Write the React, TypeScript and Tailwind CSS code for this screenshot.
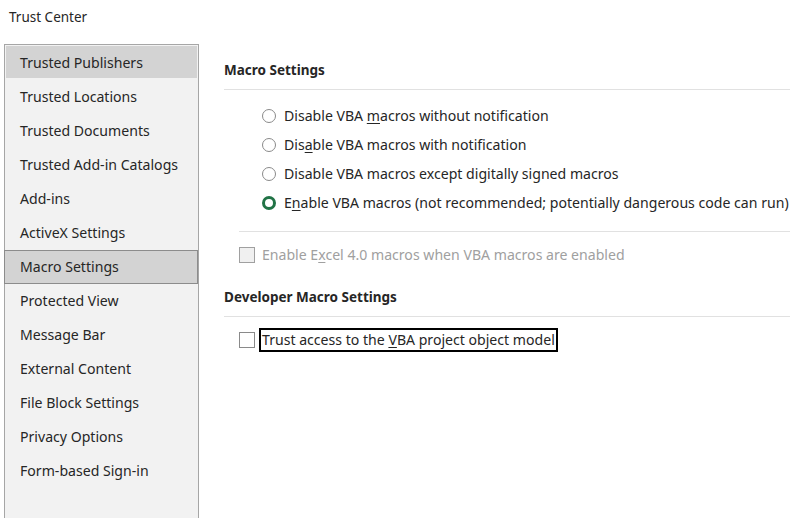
import React from 'react';

const navItems = [
  'Trusted Publishers',
  'Trusted Locations',
  'Trusted Documents',
  'Trusted Add-in Catalogs',
  'Add-ins',
  'ActiveX Settings',
  'Macro Settings',
  'Protected View',
  'Message Bar',
  'External Content',
  'File Block Settings',
  'Privacy Options',
  'Form-based Sign-in',
];

function Radio({ checked }: { checked?: boolean }) {
  return checked ? (
    <span className="w-[14px] h-[14px] rounded-full border-[3px] border-[#217346] bg-white shrink-0" />
  ) : (
    <span className="w-[14px] h-[14px] rounded-full border border-[#8a8a8a] bg-white shrink-0" />
  );
}

export default function App() {
  return (
    <div
      className="w-[790px] h-[518px] bg-white overflow-hidden text-[14.1px] text-[#262626] whitespace-nowrap"
      style={{ fontFamily: '"Noto Sans", "Open Sans", sans-serif' }}
    >
      {/* Title */}
      <div className="h-[44px] pl-[9px] pt-[6px] text-[13.5px] leading-[22px] text-[#262626]">Trust Center</div>

      <div className="flex">
        {/* Left nav */}
        <div className="ml-[4px] w-[195px] shrink-0 h-[520px] border border-[#a6a6a6] bg-[#f2f2f2] pt-[1px]">
          {navItems.map((item, i) => {
            if (i === 0) {
              return (
                <div key={item} className="mx-[1px] h-[32px] mb-[2px] bg-[#d3d3d3] pl-[14px] pt-[1px] flex items-center">
                  {item}
                </div>
              );
            }
            if (item === 'Macro Settings') {
              return (
                <div key={item} className="-ml-[1px] h-[34px] bg-[#d3d3d3] border border-[#8c8c8c] pl-[15px] flex items-center">
                  {item}
                </div>
              );
            }
            return (
              <div key={item} className="h-[34px] pl-[15px] pb-[1px] flex items-center">
                {item}
              </div>
            );
          })}
        </div>

        {/* Right content */}
        <div className="flex-1 ml-[25px]">
          <div className="h-[45px] pt-[8px] flex items-center font-bold text-[13.5px] text-[#262626]">Macro Settings</div>
          <div className="h-px bg-[#e1e1e1]" />

          <div className="pt-[11px] pl-[38px] flex flex-col">
            <label className="h-[29px] flex items-center gap-[8px]">
              <Radio />
              <span>Disable VBA <u className="underline-offset-2">m</u>acros without notification</span>
            </label>
            <label className="h-[29px] flex items-center gap-[8px]">
              <Radio />
              <span>Dis<u className="underline-offset-2">a</u>ble VBA macros with notification</span>
            </label>
            <label className="h-[29px] flex items-center gap-[8px]">
              <Radio />
              <span>Disable VBA macros except di<u className="underline-offset-2">g</u>itally signed macros</span>
            </label>
            <label className="h-[29px] flex items-center gap-[8px]">
              <Radio checked />
              <span>E<u className="underline-offset-2">n</u>able VBA macros (not recommended; potentially dangerous code can run)</span>
            </label>
          </div>

          <div className="ml-[15px] mt-[14px] h-px bg-[#e1e1e1]" />

          <div className="ml-[15px] mt-[14px] h-[18px] flex items-center gap-[7px] text-[#a0a0a0]">
            <span className="w-[16px] h-[16px] border border-[#a0a0a0] bg-[#f0f0f0] shrink-0" />
            <span>Enable E<u className="underline-offset-2">x</u>cel 4.0 macros when VBA macros are enabled</span>
          </div>

          <div className="h-[52px] pt-[14px] flex items-center font-bold text-[13.5px]">Developer Macro Settings</div>
          <div className="h-px bg-[#e1e1e1]" />

          <div className="ml-[15px] mt-[11px] flex items-center gap-[4px]">
            <span className="w-[16px] h-[16px] border border-[#8a8a8a] bg-white shrink-0" />
            <span className="border-2 border-black px-[1px] h-[24px] pb-[1px] flex items-center">
              <span>Trust access to the <u className="underline-offset-2">V</u>BA project object model</span>
            </span>
          </div>
        </div>
      </div>
    </div>
  );
}
